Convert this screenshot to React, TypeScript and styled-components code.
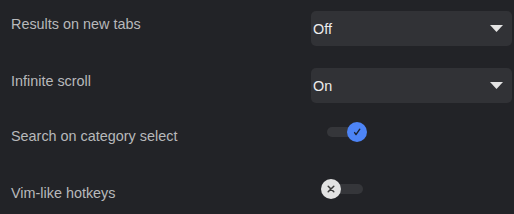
import React from 'react';
import styled, {createGlobalStyle} from 'styled-components';

const GlobalStyle = createGlobalStyle`
  html, body {
    margin: 0;
    padding: 0;
    background: #222327;
    overflow: hidden;
  }
  body {
    font-family: 'Liberation Sans', Arial, sans-serif;
  }
`;

const Page = styled.div`
  display: flex;
  flex-direction: column;
  width: 514px;
  height: 214px;
  overflow: hidden;
  background: #222327;
`;

const Row = styled.div`
  display: grid;
  grid-template-columns: 311px 201px;
  align-items: start;
  height: 57px;
  flex-shrink: 0;
`;

const Label = styled.div<{$top: number}>`
  padding: ${(p) => p.$top}px 0 0 11px;
  font-size: 14.4px;
  line-height: 18px;
  color: #b8b9bb;
`;

const SelectBox = styled.div`
  margin-top: 11px;
  height: 35px;
  border-radius: 5px;
  background: #313236;
  display: flex;
  align-items: center;
  justify-content: space-between;
  padding: 0 9px 0 2px;
  box-sizing: border-box;
  color: #ececec;
  font-size: 14.4px;
  cursor: pointer;
`;

const Arrow = styled.svg`
  width: 13px;
  height: 7px;
  display: block;
`;

const SwitchRoot = styled.div`
  position: relative;
  margin: 8px 0 0 10px;
  width: 46px;
  height: 20px;
`;

const Track = styled.div`
  position: absolute;
  left: 6px;
  top: 5px;
  width: 36px;
  height: 10px;
  border-radius: 5px;
  background: #35363a;
`;

const Knob = styled.div<{$on: boolean}>`
  position: absolute;
  top: 0;
  left: ${(p) => (p.$on ? '26px' : '0')};
  width: 20px;
  height: 20px;
  border-radius: 50%;
  background: ${(p) => (p.$on ? '#4d84f6' : '#e2e2e2')};
  display: flex;
  align-items: center;
  justify-content: center;
`;

const KnobIcon = styled.svg`
  width: 10px;
  height: 10px;
  display: block;
`;

function Select({value}: {value: string}) {
  return (
    <SelectBox>
      <span>{value}</span>
      <Arrow viewBox="0 0 13 7">
        <path d="M0 0 L13 0 L6.5 7 Z" fill="#e4e4e4" />
      </Arrow>
    </SelectBox>
  );
}

function Switch({on}: {on: boolean}) {
  return (
    <SwitchRoot>
      <Track />
      <Knob $on={on}>
        {on ? (
          <KnobIcon viewBox="0 0 10 10">
            <path
              d="M2.6 5.6 L4 7.6 L7.8 2.2"
              fill="none"
              stroke="#1b2233"
              strokeWidth="1.4"
              strokeLinecap="round"
              strokeLinejoin="round"
            />
          </KnobIcon>
        ) : (
          <KnobIcon viewBox="0 0 10 10">
            <path
              d="M2.2 2.2 L7.8 7.8 M7.8 2.2 L2.2 7.8"
              fill="none"
              stroke="#3a3a3a"
              strokeWidth="1.5"
              strokeLinecap="round"
            />
          </KnobIcon>
        )}
      </Knob>
    </SwitchRoot>
  );
}

export default function App() {
  return (
    <Page>
      <GlobalStyle />
      <Row>
        <Label $top={15}>Results on new tabs</Label>
        <Select value="Off" />
      </Row>
      <Row>
        <Label $top={15}>Infinite scroll</Label>
        <Select value="On" />
      </Row>
      <Row>
        <Label $top={13}>Search on category select</Label>
        <Switch on />
      </Row>
      <Row>
        <Label $top={13}>Vim-like hotkeys</Label>
        <Switch on={false} />
      </Row>
    </Page>
  );
}
